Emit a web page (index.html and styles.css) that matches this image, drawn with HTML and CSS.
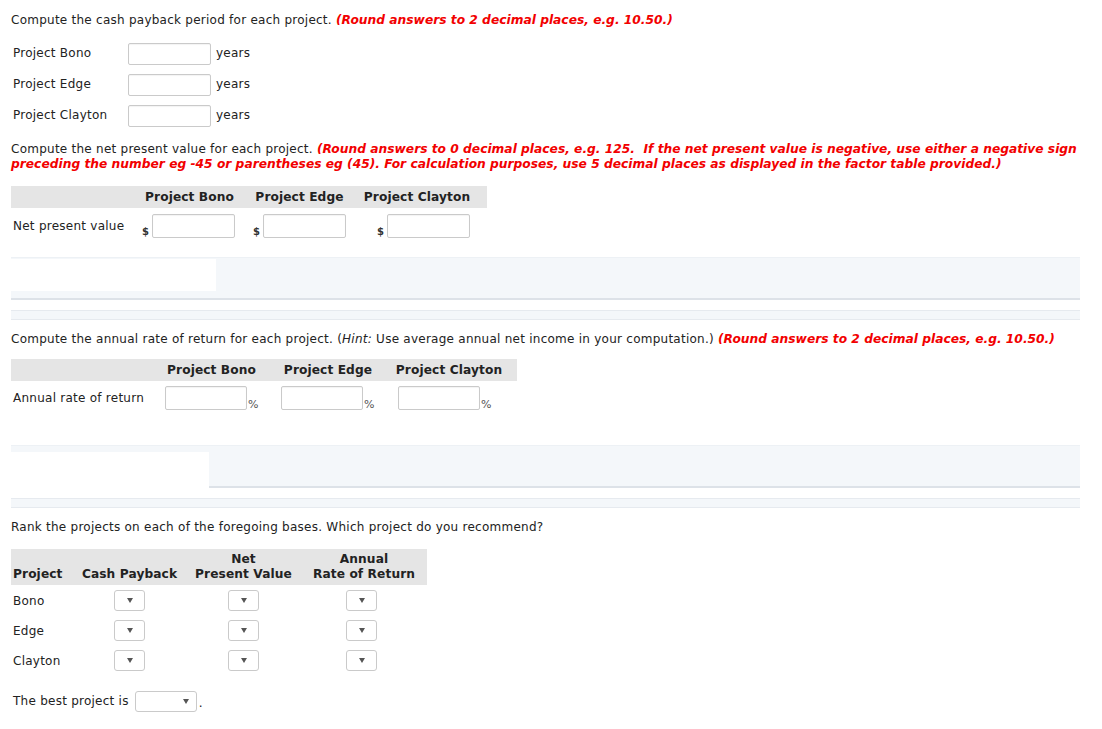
FILE: index.html
```html
<!DOCTYPE html>
<html>
<head>
<meta charset="utf-8">
<link rel="stylesheet" href="styles.css">
</head>
<body>
<div class="page">
  <p class="q">Compute the cash payback period for each project. <span class="red">(Round answers to 2 decimal places, e.g. 10.50.)</span></p>
  <table class="pb">
    <tr><td class="lbl">Project Bono</td><td><input class="inp" type="text"></td><td class="unit">years</td></tr>
    <tr><td class="lbl">Project Edge</td><td><input class="inp" type="text"></td><td class="unit">years</td></tr>
    <tr><td class="lbl">Project Clayton</td><td><input class="inp" type="text"></td><td class="unit">years</td></tr>
  </table>

  <p class="q s2">Compute the net present value for each project. <span class="red">(Round answers to 0 decimal places, e.g. 125.&nbsp; If the net present value is negative, use either a negative sign preceding the number eg -45 or parentheses eg (45). For calculation purposes, use 5 decimal places as displayed in the factor table provided.)</span></p>
  <table class="grid npv">
    <thead>
      <tr><th class="c1"></th><th class="c2">Project Bono</th><th class="c3">Project Edge</th><th class="c4">Project Clayton</th></tr>
    </thead>
    <tbody>
      <tr>
        <td class="lbl">Net present value</td>
        <td class="d2"><span class="money"><span class="cur">$</span><input class="inp" type="text"></span></td>
        <td class="d3"><span class="money"><span class="cur">$</span><input class="inp" type="text"></span></td>
        <td class="d4"><span class="money"><span class="cur">$</span><input class="inp" type="text"></span></td>
      </tr>
    </tbody>
  </table>
  <div class="fb fb1"><div class="fbw"></div><div class="fbr"></div></div>
  <div class="thin"></div>

  <p class="q s3">Compute the annual rate of return for each project. (<i>Hint:</i> Use average annual net income in your computation.) <span class="red">(Round answers to 2 decimal places, e.g. 10.50.)</span></p>
  <table class="grid arr">
    <thead>
      <tr><th class="c1"></th><th class="c2">Project Bono</th><th class="c3">Project Edge</th><th class="c4">Project Clayton</th></tr>
    </thead>
    <tbody>
      <tr>
        <td class="lbl">Annual rate of return</td>
        <td class="d2"><span class="pct"><input class="inp" type="text"><span class="pc">%</span></span></td>
        <td class="d3"><span class="pct"><input class="inp" type="text"><span class="pc">%</span></span></td>
        <td class="d4"><span class="pct"><input class="inp" type="text"><span class="pc">%</span></span></td>
      </tr>
    </tbody>
  </table>
  <div class="fb fb2"><div class="fbw"></div><div class="fbr"></div></div>
  <div class="thin"></div>

  <p class="q s4">Rank the projects on each of the foregoing bases. Which project do you recommend?</p>
  <table class="grid rank">
    <thead>
      <tr><th class="c1">Project</th><th class="c2">Cash Payback</th><th class="c3">Net<br>Present Value</th><th class="c4">Annual<br>Rate of Return</th></tr>
    </thead>
    <tbody>
      <tr><td class="lbl">Bono</td><td><span class="sel"><span class="arw"></span></span></td><td><span class="sel"><span class="arw"></span></span></td><td class="d4"><span class="sel"><span class="arw"></span></span></td></tr>
      <tr><td class="lbl">Edge</td><td><span class="sel"><span class="arw"></span></span></td><td><span class="sel"><span class="arw"></span></span></td><td class="d4"><span class="sel"><span class="arw"></span></span></td></tr>
      <tr><td class="lbl">Clayton</td><td><span class="sel"><span class="arw"></span></span></td><td><span class="sel"><span class="arw"></span></span></td><td class="d4"><span class="sel"><span class="arw"></span></span></td></tr>
    </tbody>
  </table>
  <div class="best">The best project is <span class="sel wide"><span class="arw"></span></span><span class="dot">.</span></div>
</div>
</body>
</html>
```
FILE: styles.css
```css
body {
  margin: 0;
  background: #fff;
  color: #222;
  font-family: "DejaVu Sans", Verdana, sans-serif;
  font-size: 12px;
  letter-spacing: 0.25px;
  line-height: 15px;
}
.page {
  padding: 13px 0 0 11px;
  width: 1080px;
}
.q { margin: 0; line-height: 15px; }
.red {
  color: #f20000;
  font-weight: bold;
  font-style: italic;
  font-size: 12.25px;
  letter-spacing: 0;
  line-height: 12px;
}
table { border-collapse: collapse; border-spacing: 0; }
td, th { padding: 0; }

.inp {
  display: inline-block;
  box-sizing: border-box;
  width: 83px;
  height: 22px;
  margin: 0;
  padding: 0;
  border: 1px solid #cacaca;
  border-radius: 2px;
  background: #fff;
  box-shadow: inset 0 1px 1px rgba(0, 0, 0, 0.05);
  vertical-align: middle;
  font: inherit;
}

/* cash payback */
.pb { margin-top: 10px; }
.pb tr { height: 31px; }
.pb td { vertical-align: middle; }
.pb .lbl { width: 115px; padding-left: 2px; }
.pb .unit { padding-left: 5px; }

.s2 { margin-top: 11px; }

/* grid tables */
.grid { margin-top: 14px; }
.grid thead tr { background: #e5e5e5; }
.grid th {
  height: 22px;
  font-size: 12.2px;
  letter-spacing: 0.1px;
  font-weight: bold;
  text-align: center;
  vertical-align: middle;
  color: #222;
}
.grid td { vertical-align: middle; text-align: left; }
.grid .lbl { padding-left: 2px; }

.npv .c1 { width: 126px; }
.npv .c2 { width: 105px; }
.npv .c3 { width: 115px; }
.npv .c4 { width: 120px; padding-right: 10px; }
.npv td { padding-top: 6px; padding-bottom: 6px; }
.npv .d2 { padding-left: 5px; }
.npv .d3 { padding-left: 11px; }
.npv .d4 { padding-left: 20px; }
.npv .inp { height: 24px; }

.money { display: inline-flex; align-items: flex-end; }
.cur {
  font-size: 10px;
  font-weight: bold;
  line-height: 10px;
  width: 10px;
  color: #333;
  padding-bottom: 1px;
  letter-spacing: 0;
}

.arr { margin-top: 12px; }
.arr .c1 { width: 147px; }
.arr .c2 { width: 107px; }
.arr .c3 { width: 126px; }
.arr .c4 { width: 116px; padding-right: 10px; }
.arr td { padding-top: 5px; padding-bottom: 3px; }
.arr .d2 { padding-left: 7px; }
.arr .d3 { padding-left: 16px; }
.arr .d4 { padding-left: 7px; }
.arr .inp { width: 82px; height: 24px; }
.pct { display: inline-flex; align-items: flex-end; }
.pc {
  font-size: 11px;
  line-height: 11px;
  color: #555;
  padding-left: 1px;
  letter-spacing: 0;
}

/* feedback bands */
.fb {
  display: flex;
  width: 1069px;
  background: #f4f7fa;
  border-top: 1px solid #edf1f5;
}
.fbr { flex: 1; }
.fb1 { margin-top: 12px; height: 40px; border-bottom: 2px solid #dde2e8; }
.fb1 .fbw { width: 205px; height: 32px; margin-top: 1px; background: #fff; }
.fb2 { margin-top: 32px; height: 42px; }
.fb2 .fbw { width: 198px; margin-top: 6px; background: #fff; }
.fb2 .fbr { border-bottom: 2px solid #dde2e8; }

.thin {
  width: 1069px;
  margin-top: 10px;
  height: 8px;
  background: #f4f7fa;
  border-top: 1px solid #e6eaef;
  border-bottom: 1px solid #e6eaef;
}

.s3 { margin-top: 12px; }
.s4 { margin-top: 12px; }

/* ranking */
.rank { margin-top: 14px; }
.rank th {
  height: 36px;
  vertical-align: bottom;
  padding-bottom: 3px;
  box-sizing: border-box;
  line-height: 15px;
}
.rank .c1 { width: 62px; text-align: left; padding-left: 2px; }
.rank .c2 { width: 113px; }
.rank .c3 { width: 115px; }
.rank .c4 { width: 126px; }
.rank tbody tr { height: 30px; }
.rank td { text-align: center; }
.rank td.lbl { text-align: left; vertical-align: top; padding-top: 9px; }
.rank td.d4 { padding-right: 6px; }

.sel {
  display: inline-flex;
  box-sizing: border-box;
  width: 31px;
  height: 21px;
  border: 1px solid #cacaca;
  border-radius: 3px;
  background: #fff;
  vertical-align: middle;
  align-items: center;
  justify-content: flex-end;
  padding-right: 11px;
}
.arw {
  width: 0;
  height: 0;
  border-left: 3px solid transparent;
  border-right: 3px solid transparent;
  border-top: 5px solid #555;
}
.sel.wide { width: 62px; padding-right: 7px; margin-left: 6px; }

.best {
  margin-top: 14px;
  padding-left: 2px;
  display: flex;
  align-items: center;
  height: 24px;
}
.best .dot { align-self: flex-end; line-height: 15px; padding-bottom: 2px; padding-left: 2px; }
```
